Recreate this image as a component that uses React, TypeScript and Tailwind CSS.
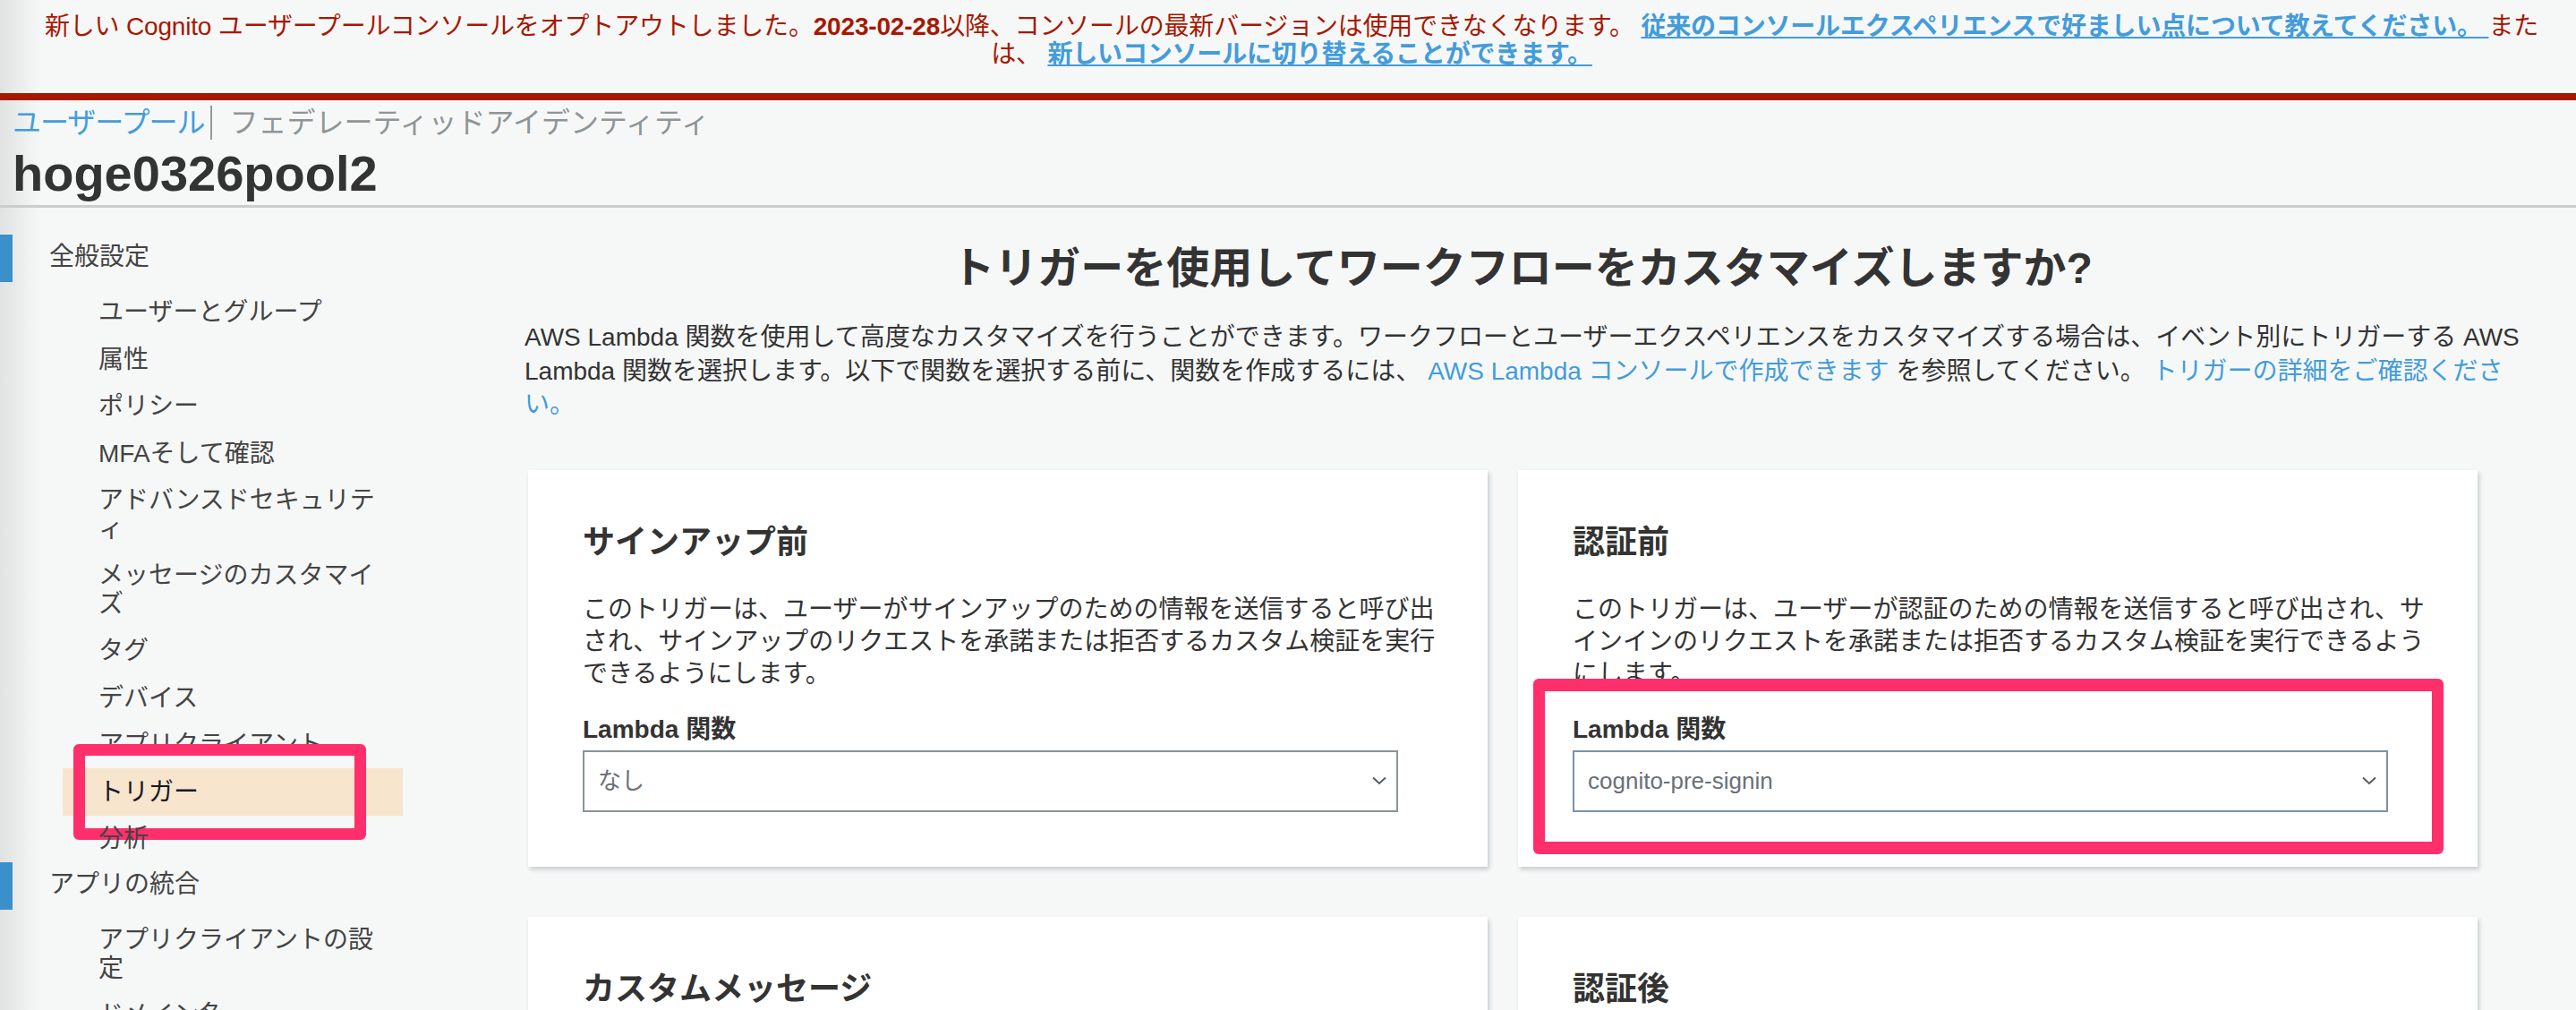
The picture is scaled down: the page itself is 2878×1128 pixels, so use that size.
const SIDE_GENERAL = [
  "ユーザーとグループ",
  "属性",
  "ポリシー",
  "MFAそして確認",
  "アドバンスドセキュリティ",
  "メッセージのカスタマイズ",
  "タグ",
  "デバイス",
  "アプリクライアント",
  "トリガー",
  "分析",
];

const SIDE_APP = ["アプリクライアントの設定", "ドメイン名"];

function NavHead({ label }: { label: string }) {
  return (
    <div className="h-[52.5px] border-l-[14px] border-[#3b8fcb] pl-[41px] text-[28px] leading-[50px] text-[#444]">
      {label}
    </div>
  );
}

function NavItem({ label }: { label: string }) {
  const active = label === "トリガー";
  return (
    <div
      className={`relative ml-[70px] w-[380px] py-[10.5px] pl-[40px] pr-[22px] text-[28px] leading-[31.5px] ${
        active ? "bg-[#f8e5cd] text-[#16191f]" : "text-[#444]"
      }`}
    >
      {label}
      {active && (
        <div className="absolute left-[12px] top-[-27px] h-[107px] w-[327px] rounded-[6px] border-x-[13.5px] border-y-[13px] border-[#ff2f6c]" />
      )}
    </div>
  );
}

function Chevron() {
  return (
    <svg width="16" height="10" viewBox="0 0 16 10" fill="none" className="shrink-0">
      <path d="M1 1.5 L8 8 L15 1.5" stroke="#545b64" strokeWidth="2" />
    </svg>
  );
}

function TriggerCard({
  title,
  body,
  value,
  focused,
}: {
  title: string;
  body?: string;
  value?: string;
  focused?: boolean;
}) {
  return (
    <div className="relative h-[443px] bg-white px-[61px] pt-[59px] shadow-[2px_3px_5px_rgba(0,28,36,0.2)]">
      <h3 className="text-[36px] font-bold leading-[44px] text-[#333]">{title}</h3>
      {body && (
        <p className="mt-[35px] w-[958px] text-[28px] leading-[36px] text-[#333]">{body}</p>
      )}
      {value && (
        <>
          <div className="mt-[26px] text-[28px] font-bold leading-[36px] text-[#333]">
            Lambda 関数
          </div>
          <div
            className={`mt-[5px] flex h-[69px] w-[911px] items-center justify-between border-2 pl-[15px] pr-[11px] text-[26px] text-[#687078] ${
              focused ? "border-[#7b92a3]" : "border-[#879596]"
            }`}
          >
            {value}
            <Chevron />
          </div>
        </>
      )}
      {focused && (
        <div className="absolute left-[17px] top-[233px] h-[196px] w-[1017px] rounded-[6px] border-x-[13px] border-y-[14px] border-[#ff2f6c]" />
      )}
    </div>
  );
}

export default function App() {
  return (
    <div className="h-[1128px] overflow-hidden bg-[linear-gradient(to_right,#e1e3e3,#f6f8f8_46px)] [font-family:'Liberation_Sans','Noto_Sans_CJK_JP',sans-serif]">
      <div className="h-[104px] pl-[34px] pr-[26px] pt-[14px] text-center text-[28px] leading-[31px] tracking-[-0.18px] text-[#a81700]">
        新しい Cognito ユーザープールコンソールをオプトアウトしました。
        <b>2023-02-28</b>以降、コンソールの最新バージョンは使用できなくなります。{" "}
        <a className="font-bold text-[#439cdb] underline">
          従来のコンソールエクスペリエンスで好ましい点について教えてください。{" "}
        </a>{" "}
        または、{" "}
        <a className="font-bold text-[#439cdb] underline">
          新しいコンソールに切り替えることができます。{" "}
        </a>
      </div>
      <div className="h-[8px] bg-[#a81700]" />

      <div className="h-[120px] border-b-[3px] border-[#ccc] pl-[14px]">
        <div className="flex items-center pt-[6px] text-[32px] leading-[38px]">
          <span className="tracking-[-1px] text-[#439cdb]">ユーザープール</span>
          <span className="ml-[7px] h-[38px] w-[2px] bg-[#999]" />
          <span className="ml-[19px] text-[#8f9596]">フェデレーティッドアイデンティティ</span>
        </div>
        <h1 className="mt-[6px] text-[56px] font-bold leading-[64px] text-[#333]">hoge0326pool2</h1>
      </div>

      <div className="flex">
        <nav className="w-[450px] shrink-0 pt-[30px]">
          <NavHead label="全般設定" />
          <div className="mt-[8px]">
            {SIDE_GENERAL.map((item) => (
              <NavItem key={item} label={item} />
            ))}
          </div>
          <NavHead label="アプリの統合" />
          <div className="mt-[8px]">
            {SIDE_APP.map((item) => (
              <NavItem key={item} label={item} />
            ))}
          </div>
        </nav>

        <main className="ml-[136px] w-[2229px] shrink-0">
          <h2 className="mt-[43px] text-center text-[48px] font-bold leading-[50px] text-[#333]">
            トリガーを使用してワークフローをカスタマイズしますか?
          </h2>
          <p className="mt-[33px] text-[28px] leading-[37.5px] text-[#333]">
            AWS Lambda 関数を使用して高度なカスタマイズを行うことができます。ワークフローとユーザーエクスペリエンスをカスタマイズする場合は、イベント別にトリガーする AWS Lambda 関数を選択します。以下で関数を選択する前に、関数を作成するには、{" "}
            <a className="text-[#439cdb]">AWS Lambda コンソールで作成できます</a> を参照してください。{" "}
            <a className="text-[#439cdb]">トリガーの詳細をご確認ください。</a>
          </p>
          <div className="mt-[54px] ml-[4px] grid w-[2178px] grid-cols-2 gap-x-[34px] gap-y-[56px]">
            <TriggerCard
              title="サインアップ前"
              body="このトリガーは、ユーザーがサインアップのための情報を送信すると呼び出され、サインアップのリクエストを承諾または拒否するカスタム検証を実行できるようにします。"
              value="なし"
            />
            <TriggerCard
              title="認証前"
              body="このトリガーは、ユーザーが認証のための情報を送信すると呼び出され、サインインのリクエストを承諾または拒否するカスタム検証を実行できるようにします。"
              value="cognito-pre-signin"
              focused
            />
            <TriggerCard title="カスタムメッセージ" />
            <TriggerCard title="認証後" />
          </div>
        </main>
      </div>
    </div>
  );
}
